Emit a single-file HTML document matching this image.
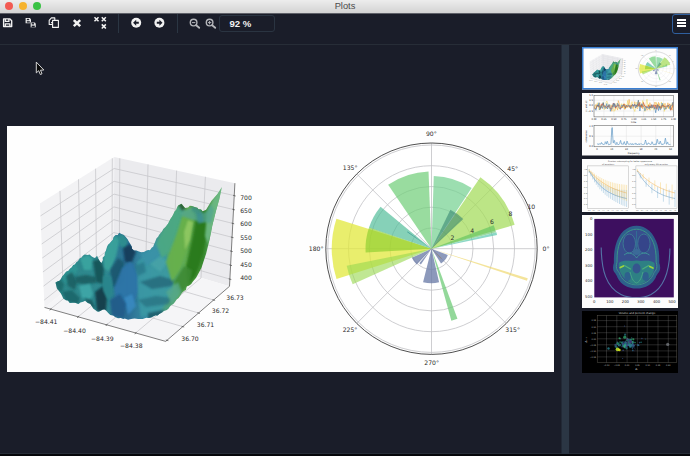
<!DOCTYPE html>
<html><head><meta charset="utf-8"><title>Plots</title>
<style>
html,body{margin:0;padding:0;}
body{width:690px;height:456px;overflow:hidden;background:#1a1d29;position:relative;font-family:"Liberation Sans",sans-serif;}
.abs{position:absolute;}
#titlebar{left:0;top:0;width:690px;height:13px;background:linear-gradient(#ededed,#d3d3d3);border-bottom:1px solid #5e6068;}
#title{left:0;top:0.3px;width:690px;height:13px;line-height:13px;text-align:center;font-size:9.3px;color:#4b4b4b;}
.tl{width:8.6px;height:8.6px;border-radius:50%;top:1.5px;}
#zoombox{left:219px;top:15px;width:54px;height:15px;border:1px solid #2a3441;border-radius:3px;box-sizing:content-box;}
#zoomtxt{left:229.5px;top:17px;font-size:9.6px;font-weight:bold;color:#f4f4f4;line-height:13px;white-space:nowrap;}
#menubtn{left:672px;top:13.5px;width:24px;height:18px;border:1px solid #2f5f9e;border-radius:3px;}
.bar{left:677px;width:9px;height:2px;background:#fff;}
</style></head><body>
<div class="abs" id="titlebar"></div>
<div class="abs" id="title">Plots</div>
<div class="abs tl" style="left:4.7px;background:#f25a52;"></div>
<div class="abs tl" style="left:18.6px;background:#f6b32e;"></div>
<div class="abs tl" style="left:32.7px;background:#39c244;"></div>
<svg class="abs" style="left:0;top:0" width="690" height="456" viewBox="0 0 690 456"><path d="M0,44.5H690M0,453.5H690" fill="none" stroke="#272d37" stroke-width="1"/><rect x="561.5" y="45" width="7.6" height="409" fill="#2b3644"/><rect x="0" y="454" width="690" height="2" fill="#05060a"/><rect x="118" y="14" width="1" height="19" fill="#2b3643"/><rect x="177" y="14" width="1" height="19" fill="#2b3643"/><g fill="none" stroke="#f2f2f2" stroke-width="1.35" stroke-linejoin="round"><path d="M3.6,18.8h6.1l2,2v5.7h-8.1z"/><path d="M5.3,18.9v2.5h3.6v-2.5"/><path d="M5.3,26.5v-2.6h4.6v2.6"/></g><g fill="#f2f2f2"><path d="M25.6,18h4.2l1.2,1.2v4h-5.4z"/><path d="M30.4,22.3h4.2l1.4,1.3v4h-5.6z"/></g><g fill="#1a1d29"><rect x="26.8" y="18.8" width="2.4" height="1.4"/><rect x="26.8" y="21.2" width="3" height="1.4"/><rect x="31.7" y="23.1" width="2.4" height="1.4"/><rect x="31.6" y="25.6" width="3.2" height="1.4"/></g><path d="M30.4,22.3h4.2l1.4,1.3v4h-5.6z" fill="none" stroke="#1a1d29" stroke-width="0.5"/><g fill="#1a1d29" stroke="#f2f2f2" stroke-width="1.1" stroke-linejoin="round"><path d="M49.2,20.3l2.2,-2.4h3.4v6.6h-5.6z"/><path d="M52.6,20.4h5.8v7h-5.8z"/><path d="M52.6,22.6h-1.5"/></g><path d="M74.7,20.9l4.6,4.4M79.3,20.9l-4.6,4.4" stroke="#f2f2f2" stroke-width="2.5" stroke-linecap="square"/><path d="M95.0,17.8l3,3M98.0,17.8l-3,3" stroke="#f2f2f2" stroke-width="1.5" stroke-linecap="square"/><path d="M102.3,17.8l3,3M105.3,17.8l-3,3" stroke="#f2f2f2" stroke-width="1.5" stroke-linecap="square"/><path d="M102.3,24.9l3,3M105.3,24.9l-3,3" stroke="#f2f2f2" stroke-width="1.5" stroke-linecap="square"/><circle cx="136.2" cy="22.7" r="5" fill="#f2f2f2"/><path d="M133.1,22.7l3.1,-3v2h2.6v2h-2.6v2z" fill="#1a1d29"/><circle cx="159.4" cy="22.7" r="5" fill="#f2f2f2"/><path d="M162.5,22.7l-3.1,-3v2h-2.6v2h2.6v2z" fill="#1a1d29"/><circle cx="193.6" cy="22.6" r="3.3" fill="none" stroke="#b4b6ba" stroke-width="1.4"/><path d="M196.2,25.2l3,2.6" stroke="#b4b6ba" stroke-width="1.8" stroke-linecap="round"/><path d="M191.9,22.6h3.4" stroke="#b4b6ba" stroke-width="1"/><circle cx="209.6" cy="22.6" r="3.3" fill="none" stroke="#b4b6ba" stroke-width="1.4"/><path d="M212.2,25.2l3,2.6" stroke="#b4b6ba" stroke-width="1.8" stroke-linecap="round"/><path d="M207.9,22.6h3.4" stroke="#b4b6ba" stroke-width="1"/><path d="M209.6,20.9v3.4" stroke="#b4b6ba" stroke-width="1"/><path d="M36.3,62.1V72.9L38.7,70.7L40.3,74.5L42,73.8L40.5,70.2L43.8,70Z" fill="#0a0a0a" stroke="#e8e8e8" stroke-width="0.9" stroke-linejoin="round"/></svg>
<div class="abs" id="zoombox"></div>
<div class="abs" id="zoomtxt">92 %</div>
<div class="abs" id="menubtn"></div>
<div class="abs bar" style="top:19px"></div><div class="abs bar" style="top:22px"></div><div class="abs bar" style="top:25px"></div>
<svg class="abs" style="left:0;top:0" width="690" height="456" viewBox="0 0 690 456">
<rect x="7" y="126" width="547" height="246" fill="#fefefe"/>
<polygon points="39.9,203.4 114.2,157.1 113.7,252.0 44.5,307.4" fill="#f2f2f4"/><polygon points="114.2,157.1 234.9,183.2 229.5,286.3 113.7,252.0" fill="#ebebee"/><polygon points="44.5,307.4 113.7,252.0 229.5,286.3 165.7,341.4" fill="#f5f5f7"/><g fill="none" stroke="#c6c6ca" stroke-width="0.75"><polyline points="60.0,190.9 63.2,292.4 182.8,326.6"/><polyline points="78.5,179.3 80.5,278.6 198.6,313.0"/><polyline points="95.6,168.7 96.4,265.9 213.7,300.0"/><polyline points="112.3,158.3 112.0,253.4"/><polyline points="40.5,215.9 114.1,168.5 234.3,195.6"/><polyline points="41.1,229.9 114.1,181.3 233.5,209.5"/><polyline points="41.7,244.0 114.0,194.1 232.8,223.4"/><polyline points="42.3,258.0 113.9,206.9 232.1,237.3"/><polyline points="42.9,272.0 113.9,219.7 231.3,251.2"/><polyline points="43.6,286.1 113.8,232.5 230.6,265.2"/><polyline points="44.2,300.1 113.7,245.4 229.9,279.1"/><polyline points="119.8,158.3 119.3,253.6 50.6,309.1"/><polyline points="148.0,164.4 145.9,261.5 78.1,316.8"/><polyline points="176.6,170.6 173.2,269.6 106.6,324.8"/><polyline points="205.4,176.8 201.0,277.9 135.6,333.0"/></g><g fill="none" stroke="#4a4a4a" stroke-width="0.7"><polyline points="44.5,307.4 165.7,341.4 229.5,286.3 234.9,183.2"/><line x1="51.4" y1="308.1" x2="49.8" y2="310.3"/><line x1="78.9" y1="315.8" x2="77.3" y2="318.0"/><line x1="107.4" y1="323.8" x2="105.8" y2="326.0"/><line x1="136.4" y1="332.0" x2="134.8" y2="334.2"/><line x1="165.8" y1="340.0" x2="168.4" y2="340.7"/><line x1="181.6" y1="326.3" x2="184.2" y2="327.0"/><line x1="197.4" y1="312.7" x2="200.0" y2="313.4"/><line x1="212.5" y1="299.7" x2="215.1" y2="300.4"/><line x1="233.1" y1="195.3" x2="235.7" y2="196.0"/><line x1="232.3" y1="209.2" x2="234.9" y2="209.9"/><line x1="231.6" y1="223.1" x2="234.2" y2="223.8"/><line x1="230.9" y1="237.0" x2="233.5" y2="237.7"/><line x1="230.1" y1="250.9" x2="232.7" y2="251.6"/><line x1="229.4" y1="264.9" x2="232.0" y2="265.6"/><line x1="228.7" y1="278.8" x2="231.3" y2="279.5"/></g><defs><linearGradient id="sg" gradientUnits="userSpaceOnUse" x1="55" y1="0" x2="223" y2="0"><stop offset="0" stop-color="#2d8688"/><stop offset="0.30" stop-color="#2f8990"/><stop offset="0.43" stop-color="#2a6c94"/><stop offset="0.56" stop-color="#3a92a4"/><stop offset="0.68" stop-color="#4fa27c"/><stop offset="0.78" stop-color="#62ac50"/><stop offset="0.88" stop-color="#3a8a30"/><stop offset="1" stop-color="#74bc88"/></linearGradient><filter id="b1" x="-30%" y="-30%" width="160%" height="160%"><feGaussianBlur stdDeviation="1.2"/></filter><clipPath id="sc"><polygon points="55.5,282.5 57.3,281.6 59.9,280.5 60.8,279.0 62.3,276.3 63.2,275.4 64.0,274.4 66.1,271.7 68.9,270.5 69.7,268.9 71.9,267.2 73.2,265.0 74.9,264.6 76.3,262.3 78.0,261.1 79.9,258.2 81.7,257.5 82.9,255.7 84.8,254.5 87.9,254.9 89.5,254.6 91.7,256.4 93.5,257.6 95.0,257.9 97.1,255.7 98.4,258.7 99.9,261.4 101.5,263.0 102.9,259.9 102.6,257.7 104.7,255.8 104.8,253.5 105.8,250.9 106.5,248.9 107.0,247.1 108.1,244.7 109.6,243.5 111.1,241.7 112.8,239.9 113.6,237.1 115.7,235.0 117.8,235.0 119.1,232.7 121.9,234.3 123.8,235.1 125.7,237.1 127.7,239.4 128.2,240.6 130.0,243.6 131.9,246.8 132.0,248.7 134.0,250.5 136.4,250.4 139.0,251.5 141.2,252.2 144.0,252.0 146.6,250.6 148.2,250.0 150.0,250.2 151.7,247.7 153.3,246.7 154.0,244.5 155.3,241.4 156.4,238.5 158.3,236.4 159.0,234.9 161.1,232.4 162.3,230.9 163.3,229.1 165.5,226.9 168.2,223.4 169.3,221.2 170.6,218.8 172.2,216.6 173.4,214.2 174.6,211.6 176.5,209.5 176.8,207.9 178.1,205.4 181.6,203.7 182.9,205.5 185.1,208.1 188.2,207.4 189.8,205.8 192.1,206.0 194.6,207.0 197.4,207.7 198.4,209.2 201.1,209.5 202.6,211.6 206.1,209.8 211.4,201.1 217.5,194.0 221.9,187.0 219.3,199.3 215.8,211.6 212.3,225.6 209.6,239.6 206.1,253.7 201.4,268.1 196.1,277.7 194.6,279.6 192.9,281.4 191.2,284.1 189.1,285.6 186.6,286.6 185.9,290.0 183.9,290.9 181.7,293.2 180.5,295.2 178.6,297.9 176.6,299.6 174.9,302.1 173.3,304.0 171.2,305.3 170.2,306.2 168.2,309.1 166.3,310.2 163.8,311.0 162.4,312.3 159.2,314.0 157.5,315.4 155.6,315.3 152.9,316.4 151.5,317.2 148.8,318.0 146.4,317.7 142.7,318.9 140.0,319.0 138.1,319.0 134.6,318.5 132.5,318.7 130.0,319.3 128.1,319.7 124.7,318.5 123.3,318.9 120.9,318.1 118.0,318.2 114.8,316.7 113.3,315.6 110.3,314.9 108.2,312.9 106.5,311.1 104.8,309.4 102.9,309.5 98.9,311.7 97.1,311.6 95.9,310.6 93.4,308.7 91.7,306.1 90.2,303.8 87.7,303.1 85.1,300.7 83.2,301.8 80.4,302.5 78.5,303.9 75.1,302.8 72.8,302.8 69.7,302.9 68.0,300.6 66.0,300.3 63.2,298.5 62.4,296.6 60.9,293.5 58.8,290.8 56.9,288.5 56.1,284.9"/></clipPath></defs><polygon points="55.5,282.5 57.3,281.6 59.9,280.5 60.8,279.0 62.3,276.3 63.2,275.4 64.0,274.4 66.1,271.7 68.9,270.5 69.7,268.9 71.9,267.2 73.2,265.0 74.9,264.6 76.3,262.3 78.0,261.1 79.9,258.2 81.7,257.5 82.9,255.7 84.8,254.5 87.9,254.9 89.5,254.6 91.7,256.4 93.5,257.6 95.0,257.9 97.1,255.7 98.4,258.7 99.9,261.4 101.5,263.0 102.9,259.9 102.6,257.7 104.7,255.8 104.8,253.5 105.8,250.9 106.5,248.9 107.0,247.1 108.1,244.7 109.6,243.5 111.1,241.7 112.8,239.9 113.6,237.1 115.7,235.0 117.8,235.0 119.1,232.7 121.9,234.3 123.8,235.1 125.7,237.1 127.7,239.4 128.2,240.6 130.0,243.6 131.9,246.8 132.0,248.7 134.0,250.5 136.4,250.4 139.0,251.5 141.2,252.2 144.0,252.0 146.6,250.6 148.2,250.0 150.0,250.2 151.7,247.7 153.3,246.7 154.0,244.5 155.3,241.4 156.4,238.5 158.3,236.4 159.0,234.9 161.1,232.4 162.3,230.9 163.3,229.1 165.5,226.9 168.2,223.4 169.3,221.2 170.6,218.8 172.2,216.6 173.4,214.2 174.6,211.6 176.5,209.5 176.8,207.9 178.1,205.4 181.6,203.7 182.9,205.5 185.1,208.1 188.2,207.4 189.8,205.8 192.1,206.0 194.6,207.0 197.4,207.7 198.4,209.2 201.1,209.5 202.6,211.6 206.1,209.8 211.4,201.1 217.5,194.0 221.9,187.0 219.3,199.3 215.8,211.6 212.3,225.6 209.6,239.6 206.1,253.7 201.4,268.1 196.1,277.7 194.6,279.6 192.9,281.4 191.2,284.1 189.1,285.6 186.6,286.6 185.9,290.0 183.9,290.9 181.7,293.2 180.5,295.2 178.6,297.9 176.6,299.6 174.9,302.1 173.3,304.0 171.2,305.3 170.2,306.2 168.2,309.1 166.3,310.2 163.8,311.0 162.4,312.3 159.2,314.0 157.5,315.4 155.6,315.3 152.9,316.4 151.5,317.2 148.8,318.0 146.4,317.7 142.7,318.9 140.0,319.0 138.1,319.0 134.6,318.5 132.5,318.7 130.0,319.3 128.1,319.7 124.7,318.5 123.3,318.9 120.9,318.1 118.0,318.2 114.8,316.7 113.3,315.6 110.3,314.9 108.2,312.9 106.5,311.1 104.8,309.4 102.9,309.5 98.9,311.7 97.1,311.6 95.9,310.6 93.4,308.7 91.7,306.1 90.2,303.8 87.7,303.1 85.1,300.7 83.2,301.8 80.4,302.5 78.5,303.9 75.1,302.8 72.8,302.8 69.7,302.9 68.0,300.6 66.0,300.3 63.2,298.5 62.4,296.6 60.9,293.5 58.8,290.8 56.9,288.5 56.1,284.9" fill="url(#sg)"/><defs><filter id="b0" x="-10%" y="-10%" width="120%" height="120%"><feGaussianBlur stdDeviation="0.5"/></filter></defs><g clip-path="url(#sc)"><polygon points="55.0,282.0 60.0,279.0 64.0,284.0 62.0,292.0 58.0,290.0" fill="#1e6a6c" opacity="0.9" filter="url(#b1)"/><polygon points="62.0,276.0 70.0,268.0 76.0,263.0 78.0,270.0 72.0,278.0 66.0,284.0" fill="#2f9694" opacity="0.85" filter="url(#b1)"/><polygon points="66.0,276.0 72.0,272.0 77.0,282.0 75.0,290.0 68.0,286.0" fill="#1d6064" opacity="0.9" filter="url(#b1)"/><polygon points="80.0,258.0 88.0,255.0 93.0,259.0 91.0,270.0 84.0,270.0" fill="#3aa6a0" opacity="0.9" filter="url(#b1)"/><polygon points="75.0,277.0 86.0,275.0 96.0,277.0 96.0,283.0 84.0,284.0 76.0,283.0" fill="#1c5e62" opacity="0.9" filter="url(#b1)"/><polygon points="93.0,261.0 100.0,259.0 104.0,268.0 103.0,284.0 96.0,282.0" fill="#175458" opacity="0.95" filter="url(#b1)"/><polygon points="62.0,292.0 72.0,290.0 80.0,298.0 78.0,304.0 66.0,301.0" fill="#1f686c" opacity="0.95" filter="url(#b1)"/><polygon points="79.0,286.0 90.0,284.0 93.0,294.0 90.0,300.0 82.0,298.0" fill="#3fa8a8" opacity="0.9" filter="url(#b1)"/><polygon points="95.0,292.0 103.0,286.0 107.0,298.0 106.0,311.0 97.0,311.0" fill="#123c48" opacity="0.95" filter="url(#b1)"/><polygon points="84.0,298.0 92.0,300.0 96.0,309.0 90.0,306.0" fill="#1a5a60" opacity="0.9" filter="url(#b1)"/><polygon points="104.0,254.0 109.0,243.0 116.0,235.0 120.0,240.0 116.0,256.0 110.0,272.0 104.0,268.0" fill="#3aa49c" opacity="0.9" filter="url(#b1)"/><polygon points="117.0,236.0 123.0,234.0 128.0,240.0 126.0,250.0 120.0,246.0" fill="#2e908e" opacity="0.9" filter="url(#b1)"/><polygon points="110.0,270.0 118.0,258.0 124.0,262.0 122.0,284.0 113.0,288.0" fill="#1b5870" opacity="0.95" filter="url(#b1)"/><polygon points="123.0,248.0 130.0,244.0 136.0,252.0 132.0,262.0 125.0,262.0" fill="#123c5a" opacity="0.95" filter="url(#b1)"/><polygon points="103.0,276.0 111.0,276.0 114.0,292.0 108.0,300.0 103.0,290.0" fill="#2a868c" opacity="0.9" filter="url(#b1)"/><polygon points="114.0,288.0 122.0,268.0 130.0,262.0 138.0,268.0 139.0,290.0 132.0,306.0 118.0,312.0" fill="#2d74a8" opacity="0.95" filter="url(#b1)"/><polygon points="124.0,298.0 132.0,294.0 136.0,306.0 128.0,315.0" fill="#3a8cc4" opacity="0.8" filter="url(#b1)"/><polygon points="110.0,300.0 120.0,294.0 126.0,304.0 124.0,318.0 112.0,316.0" fill="#235c8a" opacity="0.95" filter="url(#b1)"/><polygon points="137.0,262.0 150.0,252.0 160.0,246.0 170.0,262.0 173.0,290.0 160.0,312.0 141.0,317.0 138.0,296.0" fill="#3a98a4" opacity="0.9" filter="url(#b1)"/><polygon points="140.0,254.0 150.0,251.0 158.0,240.0 164.0,246.0 158.0,260.0 146.0,266.0" fill="#3b92a8" opacity="0.9" filter="url(#b1)"/><polygon points="134.0,266.0 144.0,262.0 146.0,272.0 138.0,276.0" fill="#2a7a8c" opacity="0.85" filter="url(#b1)"/><polygon points="140.0,282.0 160.0,276.0 174.0,280.0 172.0,286.0 152.0,289.0" fill="#256a7c" opacity="0.85" filter="url(#b1)"/><polygon points="138.0,300.0 156.0,296.0 172.0,298.0 168.0,304.0 146.0,307.0" fill="#2a7484" opacity="0.8" filter="url(#b1)"/><polygon points="148.0,313.0 164.0,310.0 160.0,318.0 148.0,320.0" fill="#1f5c6c" opacity="0.9" filter="url(#b1)"/><polygon points="150.0,264.0 160.0,256.0 168.0,262.0 160.0,272.0" fill="#48a4a8" opacity="0.8" filter="url(#b1)"/><polygon points="156.0,244.0 166.0,226.0 175.0,210.0 180.0,204.0 184.0,210.0 180.0,230.0 172.0,250.0 162.0,258.0" fill="#4ca884" opacity="0.95" filter="url(#b1)"/><polygon points="166.0,262.0 176.0,236.0 184.0,212.0 192.0,207.0 194.0,220.0 188.0,246.0 180.0,270.0 172.0,282.0" fill="#68b04c" opacity="0.95" filter="url(#b1)"/><polygon points="184.0,232.0 188.0,220.0 193.0,222.0 190.0,240.0 185.0,250.0" fill="#96cc66" opacity="0.8" filter="url(#b1)"/><polygon points="186.0,266.0 193.0,236.0 198.0,210.0 206.0,211.0 208.0,226.0 203.0,254.0 196.0,276.0 188.0,286.0" fill="#2a7a1e" opacity="0.97" filter="url(#b1)"/><polygon points="174.0,282.0 184.0,266.0 192.0,270.0 190.0,284.0 180.0,294.0" fill="#3c8a36" opacity="0.9" filter="url(#b1)"/><polygon points="207.0,214.0 213.0,200.0 222.0,187.0 219.0,206.0 213.0,230.0 208.0,244.0 205.0,236.0" fill="#6cb882" opacity="0.95" filter="url(#b1)"/><polygon points="180.0,206.0 186.0,210.0 192.0,207.0 198.0,209.0 203.0,213.0 207.0,211.0 211.0,204.0 214.0,210.0 211.0,223.0 200.0,222.0 190.0,219.0 181.0,216.0" fill="#52a690" opacity="0.8" filter="url(#b1)"/><polygon points="196.0,210.0 202.0,213.0 204.0,222.0 198.0,224.0" fill="#3a8c98" opacity="0.7" filter="url(#b1)"/><polygon points="178.0,204.0 182.0,203.0 186.0,208.0 182.0,211.0" fill="#24502c" opacity="0.8" filter="url(#b1)"/><polygon points="192.0,206.0 198.0,208.0 203.0,212.0 198.0,214.0 192.0,211.0" fill="#3e9080" opacity="0.8" filter="url(#b1)"/><polygon points="166.0,292.0 178.0,282.0 182.0,292.0 172.0,304.0" fill="#56a88c" opacity="0.8" filter="url(#b1)"/><g filter="url(#b0)"></g></g><g font-family="'DejaVu Sans','Liberation Sans',sans-serif" font-size="6.1" fill="#2a2a2a"><text x="246" y="199.5" text-anchor="middle">700</text><text x="246" y="212.9" text-anchor="middle">650</text><text x="246" y="226.3" text-anchor="middle">600</text><text x="246" y="239.70000000000002" text-anchor="middle">550</text><text x="246" y="253.10000000000002" text-anchor="middle">500</text><text x="246" y="266.5" text-anchor="middle">450</text><text x="246" y="279.7" text-anchor="middle">400</text><text x="235" y="300.1" text-anchor="middle">36.73</text><text x="220.5" y="313.0" text-anchor="middle">36.72</text><text x="205.5" y="326.7" text-anchor="middle">36.71</text><text x="190" y="340.5" text-anchor="middle">36.70</text><text x="46.2" y="324.1" text-anchor="middle">−84.41</text><text x="74.5" y="332.8" text-anchor="middle">−84.40</text><text x="102.3" y="340.5" text-anchor="middle">−84.39</text><text x="131.3" y="348.40000000000003" text-anchor="middle">−84.38</text></g><circle cx="431.5" cy="248.7" r="105.7" fill="#fff"/><g fill="none" stroke="#bdbdc1" stroke-width="0.75"><circle cx="431.5" cy="248.7" r="20.7"/><circle cx="431.5" cy="248.7" r="41.5"/><circle cx="431.5" cy="248.7" r="62.2"/><circle cx="431.5" cy="248.7" r="83.0"/><circle cx="431.5" cy="248.7" r="103.7"/><line x1="431.5" y1="248.7" x2="537.2" y2="248.7"/><line x1="431.5" y1="248.7" x2="506.2" y2="174.0"/><line x1="431.5" y1="248.7" x2="431.5" y2="143.0"/><line x1="431.5" y1="248.7" x2="356.8" y2="174.0"/><line x1="431.5" y1="248.7" x2="325.8" y2="248.7"/><line x1="431.5" y1="248.7" x2="356.8" y2="323.4"/><line x1="431.5" y1="248.7" x2="431.5" y2="354.4"/><line x1="431.5" y1="248.7" x2="506.2" y2="323.4"/></g><path d="M431.50,248.70L336.41,218.72A99.70,99.70 0 0 0 336.52,279.01Z" fill="#e2e83c" fill-opacity="0.75"/><path d="M431.50,248.70L369.10,227.21A66.00,66.00 0 0 0 365.61,252.50Z" fill="#86cc2c" fill-opacity="0.62"/><path d="M431.50,248.70L346.71,265.80A86.50,86.50 0 0 0 352.66,284.30Z" fill="#9ad850" fill-opacity="0.62"/><path d="M431.50,248.70L380.57,206.72A66.00,66.00 0 0 0 369.02,227.43Z" fill="#4dbb96" fill-opacity="0.68"/><path d="M431.50,248.70L428.53,171.46A77.30,77.30 0 0 0 388.16,184.69Z" fill="#72cf7a" fill-opacity="0.72"/><path d="M431.50,248.70L471.63,188.08A72.70,72.70 0 0 0 433.78,176.04Z" fill="#72d08e" fill-opacity="0.7"/><path d="M431.50,248.70L514.65,224.86A86.50,86.50 0 0 0 480.37,177.33Z" fill="#a2db58" fill-opacity="0.72"/><path d="M431.50,248.70L463.24,219.10A43.40,43.40 0 0 0 450.39,209.63Z" fill="#2f7f6e" fill-opacity="0.55"/><path d="M431.50,248.70L495.94,232.27A66.50,66.50 0 0 0 493.75,225.30Z" fill="#58c05c" fill-opacity="0.6"/><path d="M431.50,248.70L497.08,235.00A67.00,67.00 0 0 0 496.42,232.15Z" fill="#4fc3a8" fill-opacity="0.65"/><path d="M431.50,248.70L526.94,280.82A100.70,100.70 0 0 0 527.75,278.31Z" fill="#f0d870" fill-opacity="0.7"/><path d="M431.50,248.70L451.36,320.81A74.80,74.80 0 0 0 457.45,318.85Z" fill="#6fcb78" fill-opacity="0.75"/><path d="M431.50,248.70L423.04,282.15A34.50,34.50 0 0 0 439.08,282.36Z" fill="#6c7ca8" fill-opacity="0.78"/><path d="M431.50,248.70L441.03,263.38A17.50,17.50 0 0 0 447.84,254.97Z" fill="#6c7ca8" fill-opacity="0.78"/><path d="M431.50,248.70L411.83,257.87A21.70,21.70 0 0 0 416.70,264.57Z" fill="#6c7ca8" fill-opacity="0.78"/><path d="M431.50,248.70L419.29,263.25A19.00,19.00 0 0 0 420.88,264.45Z" fill="#6c7ca8" fill-opacity="0.78"/><path d="M431.50,248.70L407.46,231.43A29.60,29.60 0 0 0 407.05,232.02Z" fill="#2f8f94" fill-opacity="0.9"/><path d="M431.50,248.70L441.23,258.77A14.00,14.00 0 0 0 441.74,258.25Z" fill="#9a8060" fill-opacity="0.8"/><circle cx="431.5" cy="248.7" r="105.7" fill="none" stroke="#3c3c3c" stroke-width="0.9"/><g font-family="'DejaVu Sans','Liberation Sans',sans-serif" font-size="6.1" fill="#2a2a2a"><text x="431.3" y="136.20000000000002" text-anchor="middle">90°</text><text x="512.7" y="170.5" text-anchor="middle">45°</text><text x="350.2" y="170.0" text-anchor="middle">135°</text><text x="546" y="250.8" text-anchor="middle">0°</text><text x="316.1" y="250.9" text-anchor="middle">180°</text><text x="350" y="331.6" text-anchor="middle">225°</text><text x="512.7" y="331.6" text-anchor="middle">315°</text><text x="431.7" y="365.3" text-anchor="middle">270°</text><text x="452.4" y="240.20000000000002" text-anchor="middle">2</text><text x="472.1" y="232.5" text-anchor="middle">4</text><text x="491.9" y="223.70000000000002" text-anchor="middle">6</text><text x="510.5" y="216.10000000000002" text-anchor="middle">8</text><text x="531.3" y="208.8" text-anchor="middle">10</text></g>
</svg>
<svg class="abs" style="left:0;top:0" width="690" height="456" viewBox="0 0 690 456"><rect x="582" y="47" width="96" height="42.5" fill="#fdfdfd"/></svg><svg class="abs" style="left:583.5px;top:48.5px" width="93" height="39.5" viewBox="7 126 547 246" preserveAspectRatio="none"><polygon points="39.9,203.4 114.2,157.1 113.7,252.0 44.5,307.4" fill="#f2f2f4"/><polygon points="114.2,157.1 234.9,183.2 229.5,286.3 113.7,252.0" fill="#ebebee"/><polygon points="44.5,307.4 113.7,252.0 229.5,286.3 165.7,341.4" fill="#f5f5f7"/><g fill="none" stroke="#c6c6ca" stroke-width="0.75"><polyline points="60.0,190.9 63.2,292.4 182.8,326.6"/><polyline points="78.5,179.3 80.5,278.6 198.6,313.0"/><polyline points="95.6,168.7 96.4,265.9 213.7,300.0"/><polyline points="112.3,158.3 112.0,253.4"/><polyline points="40.5,215.9 114.1,168.5 234.3,195.6"/><polyline points="41.1,229.9 114.1,181.3 233.5,209.5"/><polyline points="41.7,244.0 114.0,194.1 232.8,223.4"/><polyline points="42.3,258.0 113.9,206.9 232.1,237.3"/><polyline points="42.9,272.0 113.9,219.7 231.3,251.2"/><polyline points="43.6,286.1 113.8,232.5 230.6,265.2"/><polyline points="44.2,300.1 113.7,245.4 229.9,279.1"/><polyline points="119.8,158.3 119.3,253.6 50.6,309.1"/><polyline points="148.0,164.4 145.9,261.5 78.1,316.8"/><polyline points="176.6,170.6 173.2,269.6 106.6,324.8"/><polyline points="205.4,176.8 201.0,277.9 135.6,333.0"/></g><g fill="none" stroke="#4a4a4a" stroke-width="0.7"><polyline points="44.5,307.4 165.7,341.4 229.5,286.3 234.9,183.2"/><line x1="51.4" y1="308.1" x2="49.8" y2="310.3"/><line x1="78.9" y1="315.8" x2="77.3" y2="318.0"/><line x1="107.4" y1="323.8" x2="105.8" y2="326.0"/><line x1="136.4" y1="332.0" x2="134.8" y2="334.2"/><line x1="165.8" y1="340.0" x2="168.4" y2="340.7"/><line x1="181.6" y1="326.3" x2="184.2" y2="327.0"/><line x1="197.4" y1="312.7" x2="200.0" y2="313.4"/><line x1="212.5" y1="299.7" x2="215.1" y2="300.4"/><line x1="233.1" y1="195.3" x2="235.7" y2="196.0"/><line x1="232.3" y1="209.2" x2="234.9" y2="209.9"/><line x1="231.6" y1="223.1" x2="234.2" y2="223.8"/><line x1="230.9" y1="237.0" x2="233.5" y2="237.7"/><line x1="230.1" y1="250.9" x2="232.7" y2="251.6"/><line x1="229.4" y1="264.9" x2="232.0" y2="265.6"/><line x1="228.7" y1="278.8" x2="231.3" y2="279.5"/></g><defs><linearGradient id="sgt" gradientUnits="userSpaceOnUse" x1="55" y1="0" x2="223" y2="0"><stop offset="0" stop-color="#2d8688"/><stop offset="0.30" stop-color="#2f8990"/><stop offset="0.43" stop-color="#2a6c94"/><stop offset="0.56" stop-color="#3a92a4"/><stop offset="0.68" stop-color="#4fa27c"/><stop offset="0.78" stop-color="#62ac50"/><stop offset="0.88" stop-color="#3a8a30"/><stop offset="1" stop-color="#74bc88"/></linearGradient><filter id="b1t" x="-30%" y="-30%" width="160%" height="160%"><feGaussianBlur stdDeviation="1.2"/></filter><clipPath id="sct"><polygon points="55.5,282.5 57.3,281.6 59.9,280.5 60.8,279.0 62.3,276.3 63.2,275.4 64.0,274.4 66.1,271.7 68.9,270.5 69.7,268.9 71.9,267.2 73.2,265.0 74.9,264.6 76.3,262.3 78.0,261.1 79.9,258.2 81.7,257.5 82.9,255.7 84.8,254.5 87.9,254.9 89.5,254.6 91.7,256.4 93.5,257.6 95.0,257.9 97.1,255.7 98.4,258.7 99.9,261.4 101.5,263.0 102.9,259.9 102.6,257.7 104.7,255.8 104.8,253.5 105.8,250.9 106.5,248.9 107.0,247.1 108.1,244.7 109.6,243.5 111.1,241.7 112.8,239.9 113.6,237.1 115.7,235.0 117.8,235.0 119.1,232.7 121.9,234.3 123.8,235.1 125.7,237.1 127.7,239.4 128.2,240.6 130.0,243.6 131.9,246.8 132.0,248.7 134.0,250.5 136.4,250.4 139.0,251.5 141.2,252.2 144.0,252.0 146.6,250.6 148.2,250.0 150.0,250.2 151.7,247.7 153.3,246.7 154.0,244.5 155.3,241.4 156.4,238.5 158.3,236.4 159.0,234.9 161.1,232.4 162.3,230.9 163.3,229.1 165.5,226.9 168.2,223.4 169.3,221.2 170.6,218.8 172.2,216.6 173.4,214.2 174.6,211.6 176.5,209.5 176.8,207.9 178.1,205.4 181.6,203.7 182.9,205.5 185.1,208.1 188.2,207.4 189.8,205.8 192.1,206.0 194.6,207.0 197.4,207.7 198.4,209.2 201.1,209.5 202.6,211.6 206.1,209.8 211.4,201.1 217.5,194.0 221.9,187.0 219.3,199.3 215.8,211.6 212.3,225.6 209.6,239.6 206.1,253.7 201.4,268.1 196.1,277.7 194.6,279.6 192.9,281.4 191.2,284.1 189.1,285.6 186.6,286.6 185.9,290.0 183.9,290.9 181.7,293.2 180.5,295.2 178.6,297.9 176.6,299.6 174.9,302.1 173.3,304.0 171.2,305.3 170.2,306.2 168.2,309.1 166.3,310.2 163.8,311.0 162.4,312.3 159.2,314.0 157.5,315.4 155.6,315.3 152.9,316.4 151.5,317.2 148.8,318.0 146.4,317.7 142.7,318.9 140.0,319.0 138.1,319.0 134.6,318.5 132.5,318.7 130.0,319.3 128.1,319.7 124.7,318.5 123.3,318.9 120.9,318.1 118.0,318.2 114.8,316.7 113.3,315.6 110.3,314.9 108.2,312.9 106.5,311.1 104.8,309.4 102.9,309.5 98.9,311.7 97.1,311.6 95.9,310.6 93.4,308.7 91.7,306.1 90.2,303.8 87.7,303.1 85.1,300.7 83.2,301.8 80.4,302.5 78.5,303.9 75.1,302.8 72.8,302.8 69.7,302.9 68.0,300.6 66.0,300.3 63.2,298.5 62.4,296.6 60.9,293.5 58.8,290.8 56.9,288.5 56.1,284.9"/></clipPath></defs><polygon points="55.5,282.5 57.3,281.6 59.9,280.5 60.8,279.0 62.3,276.3 63.2,275.4 64.0,274.4 66.1,271.7 68.9,270.5 69.7,268.9 71.9,267.2 73.2,265.0 74.9,264.6 76.3,262.3 78.0,261.1 79.9,258.2 81.7,257.5 82.9,255.7 84.8,254.5 87.9,254.9 89.5,254.6 91.7,256.4 93.5,257.6 95.0,257.9 97.1,255.7 98.4,258.7 99.9,261.4 101.5,263.0 102.9,259.9 102.6,257.7 104.7,255.8 104.8,253.5 105.8,250.9 106.5,248.9 107.0,247.1 108.1,244.7 109.6,243.5 111.1,241.7 112.8,239.9 113.6,237.1 115.7,235.0 117.8,235.0 119.1,232.7 121.9,234.3 123.8,235.1 125.7,237.1 127.7,239.4 128.2,240.6 130.0,243.6 131.9,246.8 132.0,248.7 134.0,250.5 136.4,250.4 139.0,251.5 141.2,252.2 144.0,252.0 146.6,250.6 148.2,250.0 150.0,250.2 151.7,247.7 153.3,246.7 154.0,244.5 155.3,241.4 156.4,238.5 158.3,236.4 159.0,234.9 161.1,232.4 162.3,230.9 163.3,229.1 165.5,226.9 168.2,223.4 169.3,221.2 170.6,218.8 172.2,216.6 173.4,214.2 174.6,211.6 176.5,209.5 176.8,207.9 178.1,205.4 181.6,203.7 182.9,205.5 185.1,208.1 188.2,207.4 189.8,205.8 192.1,206.0 194.6,207.0 197.4,207.7 198.4,209.2 201.1,209.5 202.6,211.6 206.1,209.8 211.4,201.1 217.5,194.0 221.9,187.0 219.3,199.3 215.8,211.6 212.3,225.6 209.6,239.6 206.1,253.7 201.4,268.1 196.1,277.7 194.6,279.6 192.9,281.4 191.2,284.1 189.1,285.6 186.6,286.6 185.9,290.0 183.9,290.9 181.7,293.2 180.5,295.2 178.6,297.9 176.6,299.6 174.9,302.1 173.3,304.0 171.2,305.3 170.2,306.2 168.2,309.1 166.3,310.2 163.8,311.0 162.4,312.3 159.2,314.0 157.5,315.4 155.6,315.3 152.9,316.4 151.5,317.2 148.8,318.0 146.4,317.7 142.7,318.9 140.0,319.0 138.1,319.0 134.6,318.5 132.5,318.7 130.0,319.3 128.1,319.7 124.7,318.5 123.3,318.9 120.9,318.1 118.0,318.2 114.8,316.7 113.3,315.6 110.3,314.9 108.2,312.9 106.5,311.1 104.8,309.4 102.9,309.5 98.9,311.7 97.1,311.6 95.9,310.6 93.4,308.7 91.7,306.1 90.2,303.8 87.7,303.1 85.1,300.7 83.2,301.8 80.4,302.5 78.5,303.9 75.1,302.8 72.8,302.8 69.7,302.9 68.0,300.6 66.0,300.3 63.2,298.5 62.4,296.6 60.9,293.5 58.8,290.8 56.9,288.5 56.1,284.9" fill="url(#sgt)"/><defs><filter id="b0t" x="-10%" y="-10%" width="120%" height="120%"><feGaussianBlur stdDeviation="0.5"/></filter></defs><g clip-path="url(#sct)"><polygon points="55.0,282.0 60.0,279.0 64.0,284.0 62.0,292.0 58.0,290.0" fill="#1e6a6c" opacity="0.9" filter="url(#b1t)"/><polygon points="62.0,276.0 70.0,268.0 76.0,263.0 78.0,270.0 72.0,278.0 66.0,284.0" fill="#2f9694" opacity="0.85" filter="url(#b1t)"/><polygon points="66.0,276.0 72.0,272.0 77.0,282.0 75.0,290.0 68.0,286.0" fill="#1d6064" opacity="0.9" filter="url(#b1t)"/><polygon points="80.0,258.0 88.0,255.0 93.0,259.0 91.0,270.0 84.0,270.0" fill="#3aa6a0" opacity="0.9" filter="url(#b1t)"/><polygon points="75.0,277.0 86.0,275.0 96.0,277.0 96.0,283.0 84.0,284.0 76.0,283.0" fill="#1c5e62" opacity="0.9" filter="url(#b1t)"/><polygon points="93.0,261.0 100.0,259.0 104.0,268.0 103.0,284.0 96.0,282.0" fill="#175458" opacity="0.95" filter="url(#b1t)"/><polygon points="62.0,292.0 72.0,290.0 80.0,298.0 78.0,304.0 66.0,301.0" fill="#1f686c" opacity="0.95" filter="url(#b1t)"/><polygon points="79.0,286.0 90.0,284.0 93.0,294.0 90.0,300.0 82.0,298.0" fill="#3fa8a8" opacity="0.9" filter="url(#b1t)"/><polygon points="95.0,292.0 103.0,286.0 107.0,298.0 106.0,311.0 97.0,311.0" fill="#123c48" opacity="0.95" filter="url(#b1t)"/><polygon points="84.0,298.0 92.0,300.0 96.0,309.0 90.0,306.0" fill="#1a5a60" opacity="0.9" filter="url(#b1t)"/><polygon points="104.0,254.0 109.0,243.0 116.0,235.0 120.0,240.0 116.0,256.0 110.0,272.0 104.0,268.0" fill="#3aa49c" opacity="0.9" filter="url(#b1t)"/><polygon points="117.0,236.0 123.0,234.0 128.0,240.0 126.0,250.0 120.0,246.0" fill="#2e908e" opacity="0.9" filter="url(#b1t)"/><polygon points="110.0,270.0 118.0,258.0 124.0,262.0 122.0,284.0 113.0,288.0" fill="#1b5870" opacity="0.95" filter="url(#b1t)"/><polygon points="123.0,248.0 130.0,244.0 136.0,252.0 132.0,262.0 125.0,262.0" fill="#123c5a" opacity="0.95" filter="url(#b1t)"/><polygon points="103.0,276.0 111.0,276.0 114.0,292.0 108.0,300.0 103.0,290.0" fill="#2a868c" opacity="0.9" filter="url(#b1t)"/><polygon points="114.0,288.0 122.0,268.0 130.0,262.0 138.0,268.0 139.0,290.0 132.0,306.0 118.0,312.0" fill="#2d74a8" opacity="0.95" filter="url(#b1t)"/><polygon points="124.0,298.0 132.0,294.0 136.0,306.0 128.0,315.0" fill="#3a8cc4" opacity="0.8" filter="url(#b1t)"/><polygon points="110.0,300.0 120.0,294.0 126.0,304.0 124.0,318.0 112.0,316.0" fill="#235c8a" opacity="0.95" filter="url(#b1t)"/><polygon points="137.0,262.0 150.0,252.0 160.0,246.0 170.0,262.0 173.0,290.0 160.0,312.0 141.0,317.0 138.0,296.0" fill="#3a98a4" opacity="0.9" filter="url(#b1t)"/><polygon points="140.0,254.0 150.0,251.0 158.0,240.0 164.0,246.0 158.0,260.0 146.0,266.0" fill="#3b92a8" opacity="0.9" filter="url(#b1t)"/><polygon points="134.0,266.0 144.0,262.0 146.0,272.0 138.0,276.0" fill="#2a7a8c" opacity="0.85" filter="url(#b1t)"/><polygon points="140.0,282.0 160.0,276.0 174.0,280.0 172.0,286.0 152.0,289.0" fill="#256a7c" opacity="0.85" filter="url(#b1t)"/><polygon points="138.0,300.0 156.0,296.0 172.0,298.0 168.0,304.0 146.0,307.0" fill="#2a7484" opacity="0.8" filter="url(#b1t)"/><polygon points="148.0,313.0 164.0,310.0 160.0,318.0 148.0,320.0" fill="#1f5c6c" opacity="0.9" filter="url(#b1t)"/><polygon points="150.0,264.0 160.0,256.0 168.0,262.0 160.0,272.0" fill="#48a4a8" opacity="0.8" filter="url(#b1t)"/><polygon points="156.0,244.0 166.0,226.0 175.0,210.0 180.0,204.0 184.0,210.0 180.0,230.0 172.0,250.0 162.0,258.0" fill="#4ca884" opacity="0.95" filter="url(#b1t)"/><polygon points="166.0,262.0 176.0,236.0 184.0,212.0 192.0,207.0 194.0,220.0 188.0,246.0 180.0,270.0 172.0,282.0" fill="#68b04c" opacity="0.95" filter="url(#b1t)"/><polygon points="184.0,232.0 188.0,220.0 193.0,222.0 190.0,240.0 185.0,250.0" fill="#96cc66" opacity="0.8" filter="url(#b1t)"/><polygon points="186.0,266.0 193.0,236.0 198.0,210.0 206.0,211.0 208.0,226.0 203.0,254.0 196.0,276.0 188.0,286.0" fill="#2a7a1e" opacity="0.97" filter="url(#b1t)"/><polygon points="174.0,282.0 184.0,266.0 192.0,270.0 190.0,284.0 180.0,294.0" fill="#3c8a36" opacity="0.9" filter="url(#b1t)"/><polygon points="207.0,214.0 213.0,200.0 222.0,187.0 219.0,206.0 213.0,230.0 208.0,244.0 205.0,236.0" fill="#6cb882" opacity="0.95" filter="url(#b1t)"/><polygon points="180.0,206.0 186.0,210.0 192.0,207.0 198.0,209.0 203.0,213.0 207.0,211.0 211.0,204.0 214.0,210.0 211.0,223.0 200.0,222.0 190.0,219.0 181.0,216.0" fill="#52a690" opacity="0.8" filter="url(#b1t)"/><polygon points="196.0,210.0 202.0,213.0 204.0,222.0 198.0,224.0" fill="#3a8c98" opacity="0.7" filter="url(#b1t)"/><polygon points="178.0,204.0 182.0,203.0 186.0,208.0 182.0,211.0" fill="#24502c" opacity="0.8" filter="url(#b1t)"/><polygon points="192.0,206.0 198.0,208.0 203.0,212.0 198.0,214.0 192.0,211.0" fill="#3e9080" opacity="0.8" filter="url(#b1t)"/><polygon points="166.0,292.0 178.0,282.0 182.0,292.0 172.0,304.0" fill="#56a88c" opacity="0.8" filter="url(#b1t)"/><g filter="url(#b0t)"></g></g><g font-family="'DejaVu Sans','Liberation Sans',sans-serif" font-size="6.1" fill="#2a2a2a"><text x="246" y="199.5" text-anchor="middle">700</text><text x="246" y="212.9" text-anchor="middle">650</text><text x="246" y="226.3" text-anchor="middle">600</text><text x="246" y="239.70000000000002" text-anchor="middle">550</text><text x="246" y="253.10000000000002" text-anchor="middle">500</text><text x="246" y="266.5" text-anchor="middle">450</text><text x="246" y="279.7" text-anchor="middle">400</text><text x="235" y="300.1" text-anchor="middle">36.73</text><text x="220.5" y="313.0" text-anchor="middle">36.72</text><text x="205.5" y="326.7" text-anchor="middle">36.71</text><text x="190" y="340.5" text-anchor="middle">36.70</text><text x="46.2" y="324.1" text-anchor="middle">−84.41</text><text x="74.5" y="332.8" text-anchor="middle">−84.40</text><text x="102.3" y="340.5" text-anchor="middle">−84.39</text><text x="131.3" y="348.40000000000003" text-anchor="middle">−84.38</text></g><circle cx="431.5" cy="248.7" r="105.7" fill="#fff"/><g fill="none" stroke="#bdbdc1" stroke-width="0.75"><circle cx="431.5" cy="248.7" r="20.7"/><circle cx="431.5" cy="248.7" r="41.5"/><circle cx="431.5" cy="248.7" r="62.2"/><circle cx="431.5" cy="248.7" r="83.0"/><circle cx="431.5" cy="248.7" r="103.7"/><line x1="431.5" y1="248.7" x2="537.2" y2="248.7"/><line x1="431.5" y1="248.7" x2="506.2" y2="174.0"/><line x1="431.5" y1="248.7" x2="431.5" y2="143.0"/><line x1="431.5" y1="248.7" x2="356.8" y2="174.0"/><line x1="431.5" y1="248.7" x2="325.8" y2="248.7"/><line x1="431.5" y1="248.7" x2="356.8" y2="323.4"/><line x1="431.5" y1="248.7" x2="431.5" y2="354.4"/><line x1="431.5" y1="248.7" x2="506.2" y2="323.4"/></g><path d="M431.50,248.70L336.41,218.72A99.70,99.70 0 0 0 336.52,279.01Z" fill="#e2e83c" fill-opacity="0.75"/><path d="M431.50,248.70L369.10,227.21A66.00,66.00 0 0 0 365.61,252.50Z" fill="#86cc2c" fill-opacity="0.62"/><path d="M431.50,248.70L346.71,265.80A86.50,86.50 0 0 0 352.66,284.30Z" fill="#9ad850" fill-opacity="0.62"/><path d="M431.50,248.70L380.57,206.72A66.00,66.00 0 0 0 369.02,227.43Z" fill="#4dbb96" fill-opacity="0.68"/><path d="M431.50,248.70L428.53,171.46A77.30,77.30 0 0 0 388.16,184.69Z" fill="#72cf7a" fill-opacity="0.72"/><path d="M431.50,248.70L471.63,188.08A72.70,72.70 0 0 0 433.78,176.04Z" fill="#72d08e" fill-opacity="0.7"/><path d="M431.50,248.70L514.65,224.86A86.50,86.50 0 0 0 480.37,177.33Z" fill="#a2db58" fill-opacity="0.72"/><path d="M431.50,248.70L463.24,219.10A43.40,43.40 0 0 0 450.39,209.63Z" fill="#2f7f6e" fill-opacity="0.55"/><path d="M431.50,248.70L495.94,232.27A66.50,66.50 0 0 0 493.75,225.30Z" fill="#58c05c" fill-opacity="0.6"/><path d="M431.50,248.70L497.08,235.00A67.00,67.00 0 0 0 496.42,232.15Z" fill="#4fc3a8" fill-opacity="0.65"/><path d="M431.50,248.70L526.94,280.82A100.70,100.70 0 0 0 527.75,278.31Z" fill="#f0d870" fill-opacity="0.7"/><path d="M431.50,248.70L451.36,320.81A74.80,74.80 0 0 0 457.45,318.85Z" fill="#6fcb78" fill-opacity="0.75"/><path d="M431.50,248.70L423.04,282.15A34.50,34.50 0 0 0 439.08,282.36Z" fill="#6c7ca8" fill-opacity="0.78"/><path d="M431.50,248.70L441.03,263.38A17.50,17.50 0 0 0 447.84,254.97Z" fill="#6c7ca8" fill-opacity="0.78"/><path d="M431.50,248.70L411.83,257.87A21.70,21.70 0 0 0 416.70,264.57Z" fill="#6c7ca8" fill-opacity="0.78"/><path d="M431.50,248.70L419.29,263.25A19.00,19.00 0 0 0 420.88,264.45Z" fill="#6c7ca8" fill-opacity="0.78"/><path d="M431.50,248.70L407.46,231.43A29.60,29.60 0 0 0 407.05,232.02Z" fill="#2f8f94" fill-opacity="0.9"/><path d="M431.50,248.70L441.23,258.77A14.00,14.00 0 0 0 441.74,258.25Z" fill="#9a8060" fill-opacity="0.8"/><circle cx="431.5" cy="248.7" r="105.7" fill="none" stroke="#3c3c3c" stroke-width="0.9"/><g font-family="'DejaVu Sans','Liberation Sans',sans-serif" font-size="6.1" fill="#2a2a2a"><text x="431.3" y="136.20000000000002" text-anchor="middle">90°</text><text x="512.7" y="170.5" text-anchor="middle">45°</text><text x="350.2" y="170.0" text-anchor="middle">135°</text><text x="546" y="250.8" text-anchor="middle">0°</text><text x="316.1" y="250.9" text-anchor="middle">180°</text><text x="350" y="331.6" text-anchor="middle">225°</text><text x="512.7" y="331.6" text-anchor="middle">315°</text><text x="431.7" y="365.3" text-anchor="middle">270°</text><text x="452.4" y="240.20000000000002" text-anchor="middle">2</text><text x="472.1" y="232.5" text-anchor="middle">4</text><text x="491.9" y="223.70000000000002" text-anchor="middle">6</text><text x="510.5" y="216.10000000000002" text-anchor="middle">8</text><text x="531.3" y="208.8" text-anchor="middle">10</text></g></svg><svg class="abs" style="left:0;top:0" width="690" height="456" viewBox="0 0 690 456"><rect x="582.75" y="47.75" width="94.5" height="41" fill="none" stroke="#3a7fd2" stroke-width="1.5"/><rect x="582" y="93" width="96" height="62.5" fill="#fdfdfd"/><g stroke="#dcdcdc" stroke-width="0.4"><line x1="603.9" y1="95.3" x2="603.9" y2="116.9"/><line x1="613.9" y1="95.3" x2="613.9" y2="116.9"/><line x1="623.8" y1="95.3" x2="623.8" y2="116.9"/><line x1="633.8" y1="95.3" x2="633.8" y2="116.9"/><line x1="643.7" y1="95.3" x2="643.7" y2="116.9"/><line x1="653.6" y1="95.3" x2="653.6" y2="116.9"/><line x1="663.6" y1="95.3" x2="663.6" y2="116.9"/><line x1="594.0" y1="100.2" x2="673.5" y2="100.2"/><line x1="594.0" y1="105.6" x2="673.5" y2="105.6"/><line x1="594.0" y1="111" x2="673.5" y2="111"/><line x1="611.7" y1="125.7" x2="611.7" y2="146.8"/><line x1="626.4" y1="125.7" x2="626.4" y2="146.8"/><line x1="641.1" y1="125.7" x2="641.1" y2="146.8"/><line x1="655.8" y1="125.7" x2="655.8" y2="146.8"/><line x1="670.5" y1="125.7" x2="670.5" y2="146.8"/><line x1="594.0" y1="136.2" x2="673.5" y2="136.2"/></g><polyline points="594.6,107.7 595.3,108.8 596.0,105.7 596.8,104.2 597.5,102.8 598.2,105.5 598.9,110.0 599.6,109.2 600.3,110.0 601.1,106.7 601.8,105.8 602.5,105.3 603.2,102.4 603.9,109.4 604.7,109.4 605.4,108.8 606.1,102.4 606.8,101.1 607.5,102.9 608.2,105.0 609.0,108.3 609.7,108.2 610.4,108.8 611.1,104.7 611.8,105.6 612.6,105.7 613.3,104.6 614.0,111.4 614.7,109.5 615.4,110.3 616.2,104.7 616.9,103.2 617.6,104.1 618.3,105.9 619.0,109.0 619.7,108.8 620.5,106.6 621.2,104.0 621.9,103.7 622.6,107.6 623.3,104.4 624.1,108.2 624.8,109.2 625.5,104.3 626.2,106.1 626.9,107.7 627.6,100.5 628.4,105.5 629.1,107.5 629.8,106.5 630.5,108.6 631.2,105.9 632.0,101.6 632.7,106.7 633.4,107.7 634.1,109.8 634.8,111.5 635.5,108.3 636.3,106.2 637.0,102.0 637.7,106.3 638.4,104.9 639.1,106.7 639.9,105.5 640.6,105.4 641.3,104.8 642.0,107.7 642.7,100.5 643.4,103.1 644.2,108.3 644.9,111.5 645.6,108.7 646.3,101.7 647.0,99.3 647.8,105.8 648.5,104.7 649.2,105.3 649.9,110.4 650.6,109.9 651.3,106.2 652.1,105.3 652.8,105.9 653.5,109.8 654.2,109.2 654.9,109.4 655.7,108.6 656.4,102.4 657.1,107.6 657.8,107.1 658.5,107.5 659.3,103.5 660.0,106.9 660.7,109.3 661.4,101.9 662.1,104.4 662.8,107.3 663.6,103.5 664.3,111.4 665.0,109.5 665.7,107.0 666.4,106.5 667.2,106.2 667.9,105.3 668.6,108.9 669.3,106.4 670.0,107.4 670.7,109.6 671.5,105.8 672.2,102.8 672.9,107.1" fill="none" stroke="#f3d85c" stroke-width="0.6" stroke-opacity="0.95"/><polyline points="594.6,107.5 595.3,105.0 596.0,104.5 596.8,107.3 597.5,106.5 598.2,104.9 598.9,107.2 599.6,102.8 600.3,108.2 601.1,104.7 601.8,106.0 602.5,107.9 603.2,107.5 603.9,106.1 604.7,105.4 605.4,106.2 606.1,107.4 606.8,108.6 607.5,106.4 608.2,105.9 609.0,105.6 609.7,104.8 610.4,107.4 611.1,108.2 611.8,111.3 612.6,107.3 613.3,104.6 614.0,103.8 614.7,104.7 615.4,107.7 616.2,106.5 616.9,108.2 617.6,110.1 618.3,100.6 619.0,102.4 619.7,105.2 620.5,106.7 621.2,107.6 621.9,106.7 622.6,107.9 623.3,105.9 624.1,103.5 624.8,109.3 625.5,106.7 626.2,106.2 626.9,107.3 627.6,106.2 628.4,105.2 629.1,99.4 629.8,103.9 630.5,107.9 631.2,105.0 632.0,107.4 632.7,108.4 633.4,106.9 634.1,107.3 634.8,101.7 635.5,105.4 636.3,106.6 637.0,108.6 637.7,108.6 638.4,100.3 639.1,106.5 639.9,102.1 640.6,107.4 641.3,104.5 642.0,107.8 642.7,108.8 643.4,105.0 644.2,104.8 644.9,106.4 645.6,106.4 646.3,107.1 647.0,110.3 647.8,108.5 648.5,104.7 649.2,109.6 649.9,102.7 650.6,107.8 651.3,106.8 652.1,107.7 652.8,107.9 653.5,105.6 654.2,105.7 654.9,102.0 655.7,103.3 656.4,108.4 657.1,105.6 657.8,104.6 658.5,102.4 659.3,106.8 660.0,106.3 660.7,108.9 661.4,105.5 662.1,107.4 662.8,104.4 663.6,106.6 664.3,107.4 665.0,103.3 665.7,109.1 666.4,109.2 667.2,107.1 667.9,102.8 668.6,107.8 669.3,104.3 670.0,103.8 670.7,107.0 671.5,108.1 672.2,110.2 672.9,104.5" fill="none" stroke="#f0a63c" stroke-width="0.6" stroke-opacity="0.95"/><polyline points="594.6,107.6 595.3,108.8 596.0,108.9 596.8,106.4 597.5,104.9 598.2,106.5 598.9,105.6 599.6,106.4 600.3,108.7 601.1,106.8 601.8,103.8 602.5,105.3 603.2,103.0 603.9,106.4 604.7,106.6 605.4,106.3 606.1,107.1 606.8,107.6 607.5,105.8 608.2,106.8 609.0,105.4 609.7,107.5 610.4,108.8 611.1,109.1 611.8,105.8 612.6,106.8 613.3,103.0 614.0,104.2 614.7,103.9 615.4,108.3 616.2,105.7 616.9,106.5 617.6,105.5 618.3,105.2 619.0,104.8 619.7,106.6 620.5,109.2 621.2,107.2 621.9,107.2 622.6,106.9 623.3,105.0 624.1,104.0 624.8,105.6 625.5,108.3 626.2,105.1 626.9,105.8 627.6,106.9 628.4,106.2 629.1,105.5 629.8,107.3 630.5,107.2 631.2,105.7 632.0,104.6 632.7,104.9 633.4,106.3 634.1,104.8 634.8,105.2 635.5,106.1 636.3,105.3 637.0,106.4 637.7,104.2 638.4,105.7 639.1,102.7 639.9,106.7 640.6,106.3 641.3,104.8 642.0,107.4 642.7,105.3 643.4,102.5 644.2,104.5 644.9,106.7 645.6,106.5 646.3,108.1 647.0,107.4 647.8,106.4 648.5,105.6 649.2,107.2 649.9,107.2 650.6,107.6 651.3,104.6 652.1,107.5 652.8,107.2 653.5,104.9 654.2,105.0 654.9,108.7 655.7,105.0 656.4,107.7 657.1,109.4 657.8,104.5 658.5,106.0 659.3,107.9 660.0,106.3 660.7,107.8 661.4,108.2 662.1,105.3 662.8,105.5 663.6,105.6 664.3,106.6 665.0,106.4 665.7,106.9 666.4,105.9 667.2,106.0 667.9,106.6 668.6,105.3 669.3,104.6 670.0,105.4 670.7,110.3 671.5,108.5 672.2,107.2 672.9,102.4" fill="none" stroke="#c8472c" stroke-width="0.6" stroke-opacity="0.95"/><polyline points="594.6,109.0 595.3,108.9 596.0,110.3 596.8,106.4 597.5,104.7 598.2,106.3 598.9,102.7 599.6,109.8 600.3,108.6 601.1,105.5 601.8,108.1 602.5,108.4 603.2,102.5 603.9,105.3 604.7,108.4 605.4,108.3 606.1,106.1 606.8,103.6 607.5,109.0 608.2,107.4 609.0,104.3 609.7,105.1 610.4,111.3 611.1,108.8 611.8,109.1 612.6,106.4 613.3,103.6 614.0,107.2 614.7,103.5 615.4,106.4 616.2,106.7 616.9,106.5 617.6,103.3 618.3,105.1 619.0,107.6 619.7,108.6 620.5,109.1 621.2,107.2 621.9,104.8 622.6,106.3 623.3,105.5 624.1,105.1 624.8,106.6 625.5,107.9 626.2,106.6 626.9,105.7 627.6,104.8 628.4,105.7 629.1,106.5 629.8,105.4 630.5,108.7 631.2,108.8 632.0,106.2 632.7,104.4 633.4,106.3 634.1,104.9 634.8,104.1 635.5,108.0 636.3,104.9 637.0,106.8 637.7,102.6 638.4,100.2 639.1,104.7 639.9,111.0 640.6,107.1 641.3,104.0 642.0,103.8 642.7,105.8 643.4,106.4 644.2,107.2 644.9,110.8 645.6,109.2 646.3,106.6 647.0,106.5 647.8,108.1 648.5,107.4 649.2,108.9 649.9,105.8 650.6,107.5 651.3,108.1 652.1,104.7 652.8,106.9 653.5,106.7 654.2,108.7 654.9,107.5 655.7,112.8 656.4,109.1 657.1,104.9 657.8,105.0 658.5,110.6 659.3,106.2 660.0,109.7 660.7,109.7 661.4,106.6 662.1,103.0 662.8,105.2 663.6,106.2 664.3,109.2 665.0,109.5 665.7,107.8 666.4,108.3 667.2,106.3 667.9,105.2 668.6,105.7 669.3,106.5 670.0,109.3 670.7,105.7 671.5,105.3 672.2,105.2 672.9,101.9" fill="none" stroke="#3f7db2" stroke-width="0.6" stroke-opacity="0.95"/><polyline points="597.0,144.0 597.5,143.8 597.9,144.4 598.4,144.5 598.8,143.7 599.3,143.9 599.8,144.0 600.2,144.1 600.7,144.2 601.2,142.7 601.6,142.6 602.1,144.1 602.5,144.0 603.0,143.9 603.5,144.7 603.9,144.2 604.4,144.3 604.9,143.3 605.3,141.7 605.8,142.2 606.2,144.2 606.7,142.9 607.2,141.1 607.6,141.8 608.1,144.0 608.6,144.8 609.0,144.7 609.5,144.4 609.9,144.7 610.4,143.9 610.9,143.7 611.3,137.4 611.8,128.7 612.3,127.6 612.7,135.7 613.2,142.9 613.6,142.7 614.1,140.3 614.6,140.8 615.0,143.4 615.5,144.1 616.0,144.8 616.4,143.2 616.9,142.3 617.3,143.4 617.8,144.5 618.3,144.0 618.7,144.6 619.2,144.0 619.7,143.7 620.1,141.6 620.6,140.4 621.0,142.2 621.5,144.1 622.0,144.0 622.4,144.1 622.9,144.1 623.3,144.4 623.8,142.4 624.3,141.6 624.7,143.1 625.2,144.5 625.7,144.2 626.1,144.8 626.6,142.8 627.0,141.1 627.5,141.9 628.0,144.0 628.4,144.1 628.9,144.5 629.4,144.2 629.8,144.3 630.3,144.3 630.7,143.5 631.2,143.8 631.7,144.6 632.1,143.7 632.6,143.8 633.1,144.8 633.5,144.3 634.0,143.9 634.4,143.7 634.9,144.3 635.4,144.2 635.8,143.2 636.3,143.5 636.8,144.6 637.2,144.2 637.7,144.7 638.1,144.2 638.6,143.7 639.1,144.7 639.5,143.9 640.0,144.3 640.5,143.8 640.9,144.0 641.4,144.1 641.8,143.8 642.3,144.3 642.8,144.8 643.2,144.8 643.7,144.3 644.2,144.3 644.6,144.1 645.1,141.5 645.5,140.0 646.0,141.8 646.5,143.9 646.9,144.8 647.4,144.0 647.8,143.9 648.3,142.8 648.8,143.2 649.2,144.0 649.7,143.8 650.2,144.5 650.6,144.4 651.1,144.4 651.5,143.3 652.0,141.7 652.5,142.3 652.9,144.2 653.4,144.5 653.9,144.8 654.3,144.7 654.8,143.9 655.2,144.5 655.7,143.8 656.2,144.6 656.6,142.1 657.1,139.2 657.6,139.7 658.0,142.9 658.5,143.7 658.9,143.8 659.4,143.9 659.9,141.8 660.3,141.1 660.8,142.9 661.3,144.2 661.7,144.0 662.2,144.8 662.6,144.0 663.1,144.3 663.6,144.0 664.0,144.1 664.5,143.4 665.0,139.8 665.4,138.2 665.9,140.7 666.3,144.1 666.8,144.2 667.3,142.4 667.7,142.1 668.2,143.7 668.7,144.5 669.1,144.1 669.6,144.5 670.0,144.2 670.5,144.4" fill="none" stroke="#4a8cc0" stroke-width="0.6"/><g fill="none" stroke="#3a3a3a" stroke-width="0.45"><rect x="594" y="95.3" width="79.5" height="21.6"/><rect x="594" y="125.7" width="79.5" height="21.1"/></g><g font-family="'DejaVu Sans','Liberation Sans',sans-serif" font-size="2.3" fill="#111"><text x="594.0" y="120.2" text-anchor="middle">0.00</text><text x="603.9" y="120.2" text-anchor="middle">0.25</text><text x="613.9" y="120.2" text-anchor="middle">0.50</text><text x="623.8" y="120.2" text-anchor="middle">0.75</text><text x="633.8" y="120.2" text-anchor="middle">1.00</text><text x="643.7" y="120.2" text-anchor="middle">1.25</text><text x="653.6" y="120.2" text-anchor="middle">1.50</text><text x="663.6" y="120.2" text-anchor="middle">1.75</text><text x="673.5" y="120.2" text-anchor="middle">2.00</text><text x="593" y="96.3" text-anchor="end">5.0</text><text x="593" y="101" text-anchor="end">2.5</text><text x="593" y="106.4" text-anchor="end">0.0</text><text x="593" y="111.8" text-anchor="end">−2.5</text><text x="633.7" y="123.3" text-anchor="middle">time</text><text x="597.0" y="150.3" text-anchor="middle">0</text><text x="611.7" y="150.3" text-anchor="middle">10</text><text x="626.4" y="150.3" text-anchor="middle">20</text><text x="641.1" y="150.3" text-anchor="middle">30</text><text x="655.8" y="150.3" text-anchor="middle">40</text><text x="670.5" y="150.3" text-anchor="middle">50</text><text x="593" y="127.3" text-anchor="end">1.0</text><text x="593" y="136.9" text-anchor="end">0.5</text><text x="593" y="146.5" text-anchor="end">0.0</text><text x="633.7" y="153.6" text-anchor="middle">Frequency</text><text transform="translate(587.2,106.2) rotate(-90)" text-anchor="middle">s1 and s2</text><text transform="translate(587.2,136.3) rotate(-90)" text-anchor="middle">coherence</text></g><rect x="582" y="159" width="96" height="53" fill="#fdfdfd"/><path d="M589.2,169.0V173.0M591.0,171.8V176.4M592.8,174.2V179.5M594.5,176.4V182.3M596.3,178.3V184.8M598.1,180.1V187.2M599.9,181.6V189.3M601.7,182.9V191.2M603.4,184.1V193.0M605.2,185.1V194.7M607.0,186.0V196.2M608.8,186.8V197.6M610.6,187.4V198.8M612.4,188.0V200.0M614.1,188.5V201.1M615.9,188.9V202.1M617.7,189.2V203.1M619.5,189.5V204.0M621.3,189.7V204.8M623.0,189.8V205.6M624.8,189.9V206.3M626.6,190.0V207.0" stroke="#8fbcd8" stroke-width="0.55" fill="none" stroke-opacity="0.9"/><path d="M589.2,168.9V172.1M591.0,170.6V174.4M592.8,172.1V176.6M594.5,173.6V178.6M596.3,174.9V180.5M598.1,176.1V182.3M599.9,177.1V184.1M601.7,178.1V185.7M603.4,179.0V187.2M605.2,179.8V188.6M607.0,180.6V190.0M608.8,181.3V191.3M610.6,181.9V192.5M612.4,182.4V193.6M614.1,182.9V194.7M615.9,183.3V195.8M617.7,183.7V196.8M619.5,184.0V197.7M621.3,184.3V198.6M623.0,184.5V199.5M624.8,184.7V200.3M626.6,184.9V201.1" stroke="#f6d27a" stroke-width="0.55" fill="none" stroke-opacity="0.9"/><polyline points="589.2,171.0 591.0,174.1 592.8,176.8 594.5,179.3 596.3,181.6 598.1,183.6 599.9,185.4 601.7,187.1 603.4,188.5 605.2,189.9 607.0,191.1 608.8,192.2 610.6,193.1 612.4,194.0 614.1,194.8 615.9,195.5 617.7,196.1 619.5,196.7 621.3,197.2 623.0,197.7 624.8,198.1 626.6,198.5" fill="none" stroke="#4a86b8" stroke-width="0.45"/><polyline points="589.2,170.5 591.0,172.5 592.8,174.4 594.5,176.1 596.3,177.7 598.1,179.2 599.9,180.6 601.7,181.9 603.4,183.1 605.2,184.2 607.0,185.3 608.8,186.3 610.6,187.2 612.4,188.0 614.1,188.8 615.9,189.5 617.7,190.2 619.5,190.9 621.3,191.5 623.0,192.0 624.8,192.5 626.6,193.0" fill="none" stroke="#f0a63c" stroke-width="0.45"/><path d="M640.3,173.3V178.3M646.1,179.8V186.8M651.9,184.2V193.2M657.6,187.0V198.0M663.4,188.7V201.7M669.2,189.6V204.6M675.0,190.0V207.0" stroke="#8fbcd8" stroke-width="0.55" fill="none" stroke-opacity="0.9"/><path d="M637.4,168.9V172.1M643.2,173.9V179.1M649.0,177.6V184.8M654.8,180.4V189.6M660.5,182.4V193.6M666.3,183.7V196.9M672.1,184.6V199.8" stroke="#f6d27a" stroke-width="0.55" fill="none" stroke-opacity="0.9"/><polyline points="637.4,171.0 638.4,172.7 639.3,174.3 640.3,175.8 641.3,177.2 642.2,178.6 643.2,179.9 644.1,181.1 645.1,182.2 646.1,183.3 647.0,184.3 648.0,185.3 649.0,186.2 649.9,187.1 650.9,187.9 651.9,188.7 652.8,189.4 653.8,190.1 654.8,190.7 655.7,191.3 656.7,191.9 657.6,192.5 658.6,193.0 659.6,193.5 660.5,193.9 661.5,194.4 662.5,194.8 663.4,195.2 664.4,195.6 665.4,195.9 666.3,196.2 667.3,196.5 668.3,196.8 669.2,197.1 670.2,197.4 671.1,197.6 672.1,197.9 673.1,198.1 674.0,198.3 675.0,198.5" fill="none" stroke="#4a86b8" stroke-width="0.45"/><polyline points="637.4,170.5 638.4,171.6 639.3,172.6 640.3,173.7 641.3,174.6 642.2,175.6 643.2,176.5 644.1,177.3 645.1,178.2 646.1,179.0 647.0,179.7 648.0,180.5 649.0,181.2 649.9,181.9 650.9,182.6 651.9,183.2 652.8,183.8 653.8,184.4 654.8,185.0 655.7,185.5 656.7,186.0 657.6,186.5 658.6,187.0 659.6,187.5 660.5,188.0 661.5,188.4 662.5,188.8 663.4,189.2 664.4,189.6 665.4,190.0 666.3,190.3 667.3,190.7 668.3,191.0 669.2,191.3 670.2,191.6 671.1,191.9 672.1,192.2 673.1,192.5 674.0,192.7 675.0,193.0" fill="none" stroke="#f0a63c" stroke-width="0.45"/><g fill="none" stroke="#aaa" stroke-width="0.45"><rect x="587.7" y="165.9" width="40.9" height="42.7"/><rect x="635.9" y="165.9" width="41.1" height="42.7"/></g><g font-family="'DejaVu Sans','Liberation Sans',sans-serif" font-size="2" fill="#444"><text x="630" y="161.9" text-anchor="middle">Errorbar subsampling for better appearance</text><text x="608.1" y="165" text-anchor="middle">all errorbars</text><text x="656.4" y="165" text-anchor="middle">only every 6th errorbar</text><text x="589.2" y="210.7" text-anchor="middle" font-size="1.4">0.0</text><text x="593.9" y="210.7" text-anchor="middle" font-size="1.4">0.5</text><text x="598.6" y="210.7" text-anchor="middle" font-size="1.4">1.0</text><text x="603.2" y="210.7" text-anchor="middle" font-size="1.4">1.5</text><text x="607.9" y="210.7" text-anchor="middle" font-size="1.4">2.0</text><text x="612.6" y="210.7" text-anchor="middle" font-size="1.4">2.5</text><text x="617.2" y="210.7" text-anchor="middle" font-size="1.4">3.0</text><text x="621.9" y="210.7" text-anchor="middle" font-size="1.4">3.5</text><text x="626.6" y="210.7" text-anchor="middle" font-size="1.4">4.0</text><text x="587.2" y="170.3" text-anchor="end" font-size="1.4">1.00</text><text x="587.2" y="176.1" text-anchor="end" font-size="1.4">0.85</text><text x="587.2" y="181.9" text-anchor="end" font-size="1.4">0.70</text><text x="587.2" y="187.7" text-anchor="end" font-size="1.4">0.55</text><text x="587.2" y="193.5" text-anchor="end" font-size="1.4">0.40</text><text x="587.2" y="199.3" text-anchor="end" font-size="1.4">0.25</text><text x="587.2" y="205.1" text-anchor="end" font-size="1.4">0.10</text><text x="637.4" y="210.7" text-anchor="middle" font-size="1.4">0.0</text><text x="642.1" y="210.7" text-anchor="middle" font-size="1.4">0.5</text><text x="646.8" y="210.7" text-anchor="middle" font-size="1.4">1.0</text><text x="651.5" y="210.7" text-anchor="middle" font-size="1.4">1.5</text><text x="656.2" y="210.7" text-anchor="middle" font-size="1.4">2.0</text><text x="660.9" y="210.7" text-anchor="middle" font-size="1.4">2.5</text><text x="665.6" y="210.7" text-anchor="middle" font-size="1.4">3.0</text><text x="670.3" y="210.7" text-anchor="middle" font-size="1.4">3.5</text><text x="675.0" y="210.7" text-anchor="middle" font-size="1.4">4.0</text><text x="635.4" y="170.3" text-anchor="end" font-size="1.4">1.00</text><text x="635.4" y="176.1" text-anchor="end" font-size="1.4">0.85</text><text x="635.4" y="181.9" text-anchor="end" font-size="1.4">0.70</text><text x="635.4" y="187.7" text-anchor="end" font-size="1.4">0.55</text><text x="635.4" y="193.5" text-anchor="end" font-size="1.4">0.40</text><text x="635.4" y="199.3" text-anchor="end" font-size="1.4">0.25</text><text x="635.4" y="205.1" text-anchor="end" font-size="1.4">0.10</text></g><rect x="582" y="215" width="96" height="93" fill="#fdfdfd"/><defs><clipPath id="ctc"><rect x="594.3" y="218.9" width="79.5" height="78.5"/></clipPath><filter id="ctb" x="-20%" y="-20%" width="140%" height="140%"><feGaussianBlur stdDeviation="0.5"/></filter></defs><rect x="594.3" y="218.9" width="79.5" height="78.5" fill="#3d0f5f"/><g clip-path="url(#ctc)" filter="url(#ctb)"><path d="M601.2,247.5C601.5,270 606,287 621,294.5C630,298.8 642,298.8 651,294.5C665,287 669.7,270 669.9,248.5" fill="none" stroke="#5474a6" stroke-width="1.1"/><path d="M636.6,225.8C646,225.8 654,233 657.5,245C659.5,252 659.3,259 659.3,263C660.5,266 660.5,270 659,272C657.5,274 656.5,275 655.5,278C652,284.5 645,288.6 636.6,288.6C628,288.6 621,284.5 617.7,278C616.7,275 615.7,274 614.2,272C612.7,270 612.7,266 613.9,263C613.9,259 613.7,252 615.7,245C619,233 627,225.8 636.6,225.8Z" fill="#2f5f8c"/><path d="M636.6,225.8C646,225.8 654,233 657.5,245C659.5,252 659.3,259 659.3,263C660.5,266 660.5,270 659,272C657.5,274 656.5,275 655.5,278C652,284.5 645,288.6 636.6,288.6C628,288.6 621,284.5 617.7,278C616.7,275 615.7,274 614.2,272C612.7,270 612.7,266 613.9,263C613.9,259 613.7,252 615.7,245C619,233 627,225.8 636.6,225.8Z" transform="translate(636.6,255.5) scale(0.86,0.885) translate(-636.6,-255.5)" fill="#374f8e" stroke="#3d9888" stroke-width="1.1"/><ellipse cx="629.3" cy="243.5" rx="6.2" ry="9.5" fill="#34448a" stroke="#3f8c98" stroke-width="0.7"/><ellipse cx="643.9" cy="243.5" rx="6.2" ry="9.5" fill="#34448a" stroke="#3f8c98" stroke-width="0.7"/><path d="M636.6,231V252" stroke="#2f8098" stroke-width="0.7"/><path d="M624,255C629,251 634,254 636.6,258C639,254 644,251 649.5,255" fill="none" stroke="#3f9098" stroke-width="1"/><ellipse cx="636.6" cy="252" rx="4" ry="3" fill="#3a6a98"/><path d="M618.8,263C624,259 630,262 636.6,260.5C643,262 649,259 654.5,263C655.5,272 650,282.5 636.6,285C624,282.5 617.8,272 618.8,263Z" fill="#2e8084"/><ellipse cx="636.6" cy="268.5" rx="4" ry="5" fill="#34558e"/><ellipse cx="627.7" cy="276.5" rx="3.2" ry="4.4" fill="#2f618e"/><ellipse cx="645.6" cy="276.5" rx="3.2" ry="4.4" fill="#2f618e"/><path d="M620.3,267.6l3.2,-1.6M652.9,268l-3.2,-1.6" stroke="#a0d53c" stroke-width="1.7" stroke-linecap="round"/><path d="M624.5,265.5l6,3.5M648.7,265.5l-6,3.5" stroke="#4fb07a" stroke-width="1.2" stroke-linecap="round"/><path d="M630,272C632,280 634,282 636.6,283C639,282 641,280 643,272" fill="none" stroke="#48a888" stroke-width="0.9"/></g><g font-family="'DejaVu Sans','Liberation Sans',sans-serif" font-size="3.8" fill="#222"><text x="592.3" y="220.4" text-anchor="end">0</text><text x="594.3" y="303.2" text-anchor="middle">0</text><text x="592.3" y="235.9" text-anchor="end">100</text><text x="609.8" y="303.2" text-anchor="middle">100</text><text x="592.3" y="251.4" text-anchor="end">200</text><text x="625.4" y="303.2" text-anchor="middle">200</text><text x="592.3" y="266.9" text-anchor="end">300</text><text x="640.9" y="303.2" text-anchor="middle">300</text><text x="592.3" y="282.4" text-anchor="end">400</text><text x="656.5" y="303.2" text-anchor="middle">400</text><text x="592.3" y="297.9" text-anchor="end">500</text><text x="672.0" y="303.2" text-anchor="middle">500</text></g><rect x="582" y="311" width="96" height="62" fill="#000"/><g stroke="#777" stroke-width="0.45" stroke-opacity="0.7"><line x1="606.5" y1="315.5" x2="606.5" y2="362.6"/><line x1="616.8" y1="315.5" x2="616.8" y2="362.6"/><line x1="627.1" y1="315.5" x2="627.1" y2="362.6"/><line x1="637.4" y1="315.5" x2="637.4" y2="362.6"/><line x1="647.7" y1="315.5" x2="647.7" y2="362.6"/><line x1="658.0" y1="315.5" x2="658.0" y2="362.6"/><line x1="668.3" y1="315.5" x2="668.3" y2="362.6"/><line x1="597.2" y1="320.6" x2="676.8" y2="320.6"/><line x1="597.2" y1="326.7" x2="676.8" y2="326.7"/><line x1="597.2" y1="332.7" x2="676.8" y2="332.7"/><line x1="597.2" y1="338.8" x2="676.8" y2="338.8"/><line x1="597.2" y1="344.8" x2="676.8" y2="344.8"/><line x1="597.2" y1="350.9" x2="676.8" y2="350.9"/><line x1="597.2" y1="356.9" x2="676.8" y2="356.9"/><rect x="597.2" y="315.5" width="79.6" height="47.1" fill="none" stroke="#8a8578"/></g><circle cx="629.4" cy="345.6" r="1.01" fill="#3b528b" fill-opacity="0.7"/><circle cx="641.1" cy="342.2" r="0.76" fill="#21918c" fill-opacity="0.7"/><circle cx="645.7" cy="339.0" r="0.52" fill="#2c728e" fill-opacity="0.7"/><circle cx="628.6" cy="344.6" r="0.93" fill="#472d7b" fill-opacity="0.7"/><circle cx="625.9" cy="345.2" r="0.77" fill="#3fbc73" fill-opacity="0.7"/><circle cx="632.5" cy="338.9" r="0.35" fill="#31688e" fill-opacity="0.7"/><circle cx="627.5" cy="341.3" r="0.28" fill="#27ad81" fill-opacity="0.7"/><circle cx="631.6" cy="342.4" r="1.04" fill="#414487" fill-opacity="0.7"/><circle cx="632.3" cy="345.1" r="0.98" fill="#2a788e" fill-opacity="0.7"/><circle cx="626.8" cy="340.3" r="0.74" fill="#35b779" fill-opacity="0.7"/><circle cx="630.5" cy="342.7" r="0.71" fill="#3b528b" fill-opacity="0.7"/><circle cx="632.4" cy="341.7" r="1.04" fill="#26828e" fill-opacity="0.7"/><circle cx="639.6" cy="342.6" r="0.82" fill="#3b528b" fill-opacity="0.7"/><circle cx="626.5" cy="348.5" r="0.89" fill="#21918c" fill-opacity="0.7"/><circle cx="633.3" cy="342.3" r="0.74" fill="#2c728e" fill-opacity="0.7"/><circle cx="627.4" cy="339.2" r="1.40" fill="#472d7b" fill-opacity="0.7"/><circle cx="633.3" cy="339.3" r="1.08" fill="#3fbc73" fill-opacity="0.7"/><circle cx="626.6" cy="345.5" r="0.91" fill="#31688e" fill-opacity="0.7"/><circle cx="617.8" cy="343.6" r="1.42" fill="#27ad81" fill-opacity="0.7"/><circle cx="623.8" cy="341.3" r="0.36" fill="#414487" fill-opacity="0.7"/><circle cx="619.6" cy="345.1" r="1.51" fill="#2a788e" fill-opacity="0.7"/><circle cx="630.3" cy="344.9" r="1.76" fill="#35b779" fill-opacity="0.7"/><circle cx="624.1" cy="342.3" r="0.99" fill="#3b528b" fill-opacity="0.7"/><circle cx="631.1" cy="341.4" r="0.28" fill="#26828e" fill-opacity="0.7"/><circle cx="629.4" cy="344.9" r="0.34" fill="#3b528b" fill-opacity="0.7"/><circle cx="626.2" cy="342.7" r="0.96" fill="#21918c" fill-opacity="0.7"/><circle cx="626.7" cy="344.0" r="0.59" fill="#2c728e" fill-opacity="0.7"/><circle cx="634.3" cy="348.1" r="0.58" fill="#472d7b" fill-opacity="0.7"/><circle cx="633.0" cy="342.1" r="0.78" fill="#3fbc73" fill-opacity="0.7"/><circle cx="632.4" cy="348.4" r="0.58" fill="#31688e" fill-opacity="0.7"/><circle cx="627.0" cy="344.7" r="0.42" fill="#27ad81" fill-opacity="0.7"/><circle cx="627.6" cy="342.3" r="0.92" fill="#414487" fill-opacity="0.7"/><circle cx="620.2" cy="338.7" r="0.77" fill="#2a788e" fill-opacity="0.7"/><circle cx="629.2" cy="342.7" r="1.15" fill="#35b779" fill-opacity="0.7"/><circle cx="625.7" cy="342.5" r="0.96" fill="#3b528b" fill-opacity="0.7"/><circle cx="617.3" cy="342.3" r="0.74" fill="#26828e" fill-opacity="0.7"/><circle cx="633.0" cy="343.7" r="0.89" fill="#3b528b" fill-opacity="0.7"/><circle cx="623.2" cy="345.0" r="1.50" fill="#21918c" fill-opacity="0.7"/><circle cx="623.0" cy="350.8" r="0.46" fill="#2c728e" fill-opacity="0.7"/><circle cx="627.6" cy="344.7" r="1.21" fill="#472d7b" fill-opacity="0.7"/><circle cx="619.5" cy="338.3" r="1.02" fill="#3fbc73" fill-opacity="0.7"/><circle cx="632.7" cy="345.9" r="1.93" fill="#31688e" fill-opacity="0.7"/><circle cx="628.8" cy="344.9" r="1.17" fill="#27ad81" fill-opacity="0.7"/><circle cx="629.9" cy="348.9" r="0.31" fill="#414487" fill-opacity="0.7"/><circle cx="625.1" cy="334.6" r="1.12" fill="#2a788e" fill-opacity="0.7"/><circle cx="625.1" cy="346.8" r="1.72" fill="#35b779" fill-opacity="0.7"/><circle cx="627.5" cy="343.5" r="0.53" fill="#3b528b" fill-opacity="0.7"/><circle cx="622.1" cy="342.4" r="1.04" fill="#26828e" fill-opacity="0.7"/><circle cx="627.7" cy="344.4" r="0.67" fill="#3b528b" fill-opacity="0.7"/><circle cx="633.4" cy="345.6" r="0.69" fill="#21918c" fill-opacity="0.7"/><circle cx="631.8" cy="343.8" r="0.27" fill="#2c728e" fill-opacity="0.7"/><circle cx="637.0" cy="345.5" r="0.32" fill="#472d7b" fill-opacity="0.7"/><circle cx="634.5" cy="345.2" r="0.45" fill="#3fbc73" fill-opacity="0.7"/><circle cx="638.0" cy="345.1" r="1.15" fill="#31688e" fill-opacity="0.7"/><circle cx="628.8" cy="343.8" r="0.45" fill="#27ad81" fill-opacity="0.7"/><circle cx="633.8" cy="344.3" r="0.62" fill="#414487" fill-opacity="0.7"/><circle cx="629.8" cy="344.4" r="1.05" fill="#2a788e" fill-opacity="0.7"/><circle cx="625.1" cy="344.1" r="0.71" fill="#35b779" fill-opacity="0.7"/><circle cx="624.7" cy="346.1" r="1.35" fill="#3b528b" fill-opacity="0.7"/><circle cx="625.1" cy="343.9" r="1.46" fill="#26828e" fill-opacity="0.7"/><circle cx="625.4" cy="346.3" r="1.51" fill="#3b528b" fill-opacity="0.7"/><circle cx="627.8" cy="347.6" r="0.43" fill="#21918c" fill-opacity="0.7"/><circle cx="628.8" cy="344.0" r="0.80" fill="#2c728e" fill-opacity="0.7"/><circle cx="634.8" cy="350.9" r="0.45" fill="#472d7b" fill-opacity="0.7"/><circle cx="623.8" cy="345.6" r="0.28" fill="#3fbc73" fill-opacity="0.7"/><circle cx="630.7" cy="345.8" r="0.63" fill="#31688e" fill-opacity="0.7"/><circle cx="631.0" cy="339.9" r="1.09" fill="#27ad81" fill-opacity="0.7"/><circle cx="617.5" cy="342.2" r="0.50" fill="#414487" fill-opacity="0.7"/><circle cx="624.9" cy="346.6" r="0.79" fill="#2a788e" fill-opacity="0.7"/><circle cx="624.9" cy="345.7" r="1.46" fill="#35b779" fill-opacity="0.7"/><circle cx="627.5" cy="345.2" r="1.31" fill="#3b528b" fill-opacity="0.7"/><circle cx="629.2" cy="340.6" r="1.87" fill="#26828e" fill-opacity="0.7"/><circle cx="641.9" cy="338.6" r="0.73" fill="#3b528b" fill-opacity="0.7"/><circle cx="630.2" cy="346.9" r="1.05" fill="#21918c" fill-opacity="0.7"/><circle cx="625.7" cy="341.2" r="0.80" fill="#2c728e" fill-opacity="0.7"/><circle cx="634.2" cy="341.1" r="0.29" fill="#472d7b" fill-opacity="0.7"/><circle cx="627.3" cy="338.8" r="0.63" fill="#3fbc73" fill-opacity="0.7"/><circle cx="624.7" cy="345.5" r="0.43" fill="#31688e" fill-opacity="0.7"/><circle cx="621.8" cy="343.1" r="0.73" fill="#27ad81" fill-opacity="0.7"/><circle cx="623.2" cy="344.2" r="1.09" fill="#414487" fill-opacity="0.7"/><circle cx="635.2" cy="349.0" r="0.40" fill="#2a788e" fill-opacity="0.7"/><circle cx="624.8" cy="337.2" r="1.60" fill="#35b779" fill-opacity="0.7"/><circle cx="622.8" cy="344.1" r="0.99" fill="#3b528b" fill-opacity="0.7"/><circle cx="618.7" cy="345.5" r="0.74" fill="#26828e" fill-opacity="0.7"/><circle cx="615.6" cy="345.0" r="1.29" fill="#3b528b" fill-opacity="0.7"/><circle cx="615.4" cy="346.5" r="0.84" fill="#21918c" fill-opacity="0.7"/><circle cx="630.6" cy="345.4" r="1.34" fill="#2c728e" fill-opacity="0.7"/><circle cx="626.0" cy="346.6" r="0.57" fill="#472d7b" fill-opacity="0.7"/><circle cx="632.2" cy="341.9" r="0.70" fill="#3fbc73" fill-opacity="0.7"/><circle cx="638.8" cy="345.4" r="0.68" fill="#31688e" fill-opacity="0.7"/><circle cx="620.1" cy="342.0" r="0.84" fill="#27ad81" fill-opacity="0.7"/><circle cx="633.6" cy="345.4" r="0.99" fill="#414487" fill-opacity="0.7"/><circle cx="627.2" cy="348.0" r="0.57" fill="#2a788e" fill-opacity="0.7"/><circle cx="623.9" cy="346.7" r="0.78" fill="#35b779" fill-opacity="0.7"/><circle cx="625.7" cy="342.6" r="0.63" fill="#3b528b" fill-opacity="0.7"/><circle cx="631.6" cy="345.2" r="0.29" fill="#26828e" fill-opacity="0.7"/><circle cx="630.3" cy="344.7" r="0.30" fill="#3b528b" fill-opacity="0.7"/><circle cx="632.5" cy="343.4" r="0.60" fill="#21918c" fill-opacity="0.7"/><circle cx="632.7" cy="347.9" r="0.44" fill="#2c728e" fill-opacity="0.7"/><circle cx="630.3" cy="341.7" r="1.79" fill="#472d7b" fill-opacity="0.7"/><circle cx="624.3" cy="347.5" r="0.46" fill="#3fbc73" fill-opacity="0.7"/><circle cx="632.8" cy="350.4" r="0.89" fill="#31688e" fill-opacity="0.7"/><circle cx="624.7" cy="345.6" r="0.71" fill="#27ad81" fill-opacity="0.7"/><circle cx="623.2" cy="350.2" r="0.79" fill="#414487" fill-opacity="0.7"/><circle cx="616.8" cy="346.6" r="0.52" fill="#2a788e" fill-opacity="0.7"/><circle cx="635.0" cy="342.6" r="0.82" fill="#35b779" fill-opacity="0.7"/><circle cx="635.7" cy="344.5" r="0.38" fill="#3b528b" fill-opacity="0.7"/><circle cx="616.5" cy="347.5" r="1.08" fill="#26828e" fill-opacity="0.7"/><circle cx="622.2" cy="346.6" r="0.97" fill="#3b528b" fill-opacity="0.7"/><circle cx="631.7" cy="337.9" r="0.61" fill="#21918c" fill-opacity="0.7"/><circle cx="617.6" cy="349.3" r="1.9" fill="#b8de29" fill-opacity="0.9"/><circle cx="619.4" cy="350" r="1.3" fill="#dce319" fill-opacity="0.9"/><circle cx="608.5" cy="348.5" r="1.2" fill="#26828e" fill-opacity="0.8"/><circle cx="667.7" cy="344.4" r="1.6" fill="#9aa0a8" fill-opacity="0.55"/><circle cx="624.5" cy="326" r="0.6" fill="#3b528b" fill-opacity="0.8"/><circle cx="622.7" cy="358.5" r="0.5" fill="#3b528b" fill-opacity="0.8"/><g font-family="'DejaVu Sans','Liberation Sans',sans-serif" font-size="2" fill="#d8d8d8"><text x="637" y="314.3" text-anchor="middle" font-size="2.6">Volume and percent change</text><text x="606.5" y="366" text-anchor="middle">−0.10</text><text x="616.8" y="366" text-anchor="middle">−0.05</text><text x="627.1" y="366" text-anchor="middle">0.00</text><text x="637.4" y="366" text-anchor="middle">0.05</text><text x="647.7" y="366" text-anchor="middle">0.10</text><text x="658.0" y="366" text-anchor="middle">0.15</text><text x="668.3" y="366" text-anchor="middle">0.20</text><text x="596" y="321.4" text-anchor="end">0.15</text><text x="596" y="327.5" text-anchor="end">0.10</text><text x="596" y="333.5" text-anchor="end">0.05</text><text x="596" y="339.6" text-anchor="end">0.00</text><text x="596" y="345.6" text-anchor="end">−0.05</text><text x="596" y="351.7" text-anchor="end">−0.10</text><text x="596" y="357.7" text-anchor="end">−0.15</text><text x="636.5" y="370.3" text-anchor="middle" font-size="2.8">Δᵢ</text><text transform="translate(586.8,340) rotate(-90)" text-anchor="middle" font-size="2.8">Δᵢ₊₁</text></g></svg>
</body></html>
